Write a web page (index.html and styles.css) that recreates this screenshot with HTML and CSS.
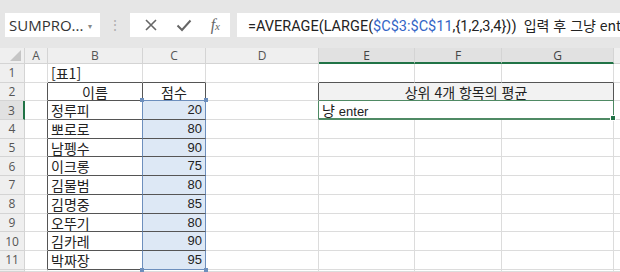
FILE: index.html
```html
<!DOCTYPE html>
<html lang="ko">
  <head>
    <meta charset="UTF-8" />
    <title>Excel - 상위 4개 항목의 평균</title>
    <link rel="stylesheet" href="styles.css">
  </head>
  <body>
    <!-- FORMULA BAR -->
    <div class="formula-bar">
      <div class="name-box">
        <span>SUMPRO...</span>
        <span class="caret">&#9662;</span>
      </div>
      <div class="grip">&#8942;</div>
      <div class="fx-buttons">
        <svg class="ico" width="14" height="14" viewBox="0 0 14 14">
          <path d="M2 2 L12 12 M12 2 L2 12" stroke="#666" stroke-width="1.6" fill="none" />
        </svg>
        <svg class="ico" width="16" height="14" viewBox="0 0 16 14">
          <path d="M1.5 7.5 L6 12 L14.5 2.5" stroke="#666" stroke-width="2" fill="none" />
        </svg>
        <span class="fx">f<i>x</i></span>
      </div>
      <div class="formula-input">
        =AVERAGE(LARGE(<span class="ref">$C$3:$C$11</span>,{1,2,3,4}))&nbsp; <span class="ko">입력 후 그냥 ente</span>
      </div>
    </div>

    <!-- SHEET -->
    <div class="sheet">
      <!-- column headers -->
      <div class="hd corner"><span class="tri"></span></div>
      <div class="hd">A</div>
      <div class="hd">B</div>
      <div class="hd">C</div>
      <div class="hd">D</div>
      <div class="hd act">E</div>
      <div class="hd act">F</div>
      <div class="hd act">G</div>
      <div class="hd"></div>

      <!-- row 1 -->
      <div class="rh">1</div>
      <div class="c"></div>
      <div class="c t-top ko">[표1]</div>
      <div class="c t-top"></div>
      <div class="c"></div>
      <div class="c t-top"></div>
      <div class="c t-top"></div>
      <div class="c t-top"></div>
      <div class="c"></div>

      <!-- row 2 -->
      <div class="rh">2</div>
      <div class="c t-left"></div>
      <div class="c t ko mid">이름</div>
      <div class="c t ko mid sel-top">점수</div>
      <div class="c t-left"></div>
      <div class="c title ko">상위 4개 항목의 평균</div>
      <div class="c"></div>

      <!-- row 3 -->
      <div class="rh act">3</div>
      <div class="c t-left"></div>
      <div class="c t ko sel-left">정루피</div>
      <div class="c t num sel first">20</div>
      <div class="c e-left"></div>
      <div class="c editing ko">냥 <span class="en">enter</span></div>
      <div class="c"></div>

      <!-- row 4 -->
      <div class="rh">4</div>
      <div class="c t-left"></div>
      <div class="c t ko sel-left">뽀로로</div>
      <div class="c t num sel">80</div>
      <div class="c"></div>
      <div class="c"></div>
      <div class="c"></div>
      <div class="c"></div>
      <div class="c"></div>

      <!-- row 5 -->
      <div class="rh">5</div>
      <div class="c t-left"></div>
      <div class="c t ko sel-left">남펭수</div>
      <div class="c t num sel">90</div>
      <div class="c"></div>
      <div class="c"></div>
      <div class="c"></div>
      <div class="c"></div>
      <div class="c"></div>

      <!-- row 6 -->
      <div class="rh">6</div>
      <div class="c t-left"></div>
      <div class="c t ko sel-left">이크롱</div>
      <div class="c t num sel">75</div>
      <div class="c"></div>
      <div class="c"></div>
      <div class="c"></div>
      <div class="c"></div>
      <div class="c"></div>

      <!-- row 7 -->
      <div class="rh">7</div>
      <div class="c t-left"></div>
      <div class="c t ko sel-left">김물범</div>
      <div class="c t num sel">80</div>
      <div class="c"></div>
      <div class="c"></div>
      <div class="c"></div>
      <div class="c"></div>
      <div class="c"></div>

      <!-- row 8 -->
      <div class="rh">8</div>
      <div class="c t-left"></div>
      <div class="c t ko sel-left">김명중</div>
      <div class="c t num sel">85</div>
      <div class="c"></div>
      <div class="c"></div>
      <div class="c"></div>
      <div class="c"></div>
      <div class="c"></div>

      <!-- row 9 -->
      <div class="rh">9</div>
      <div class="c t-left"></div>
      <div class="c t ko sel-left">오뚜기</div>
      <div class="c t num sel">80</div>
      <div class="c"></div>
      <div class="c"></div>
      <div class="c"></div>
      <div class="c"></div>
      <div class="c"></div>

      <!-- row 10 -->
      <div class="rh">10</div>
      <div class="c t-left"></div>
      <div class="c t ko sel-left">김카레</div>
      <div class="c t num sel">90</div>
      <div class="c"></div>
      <div class="c"></div>
      <div class="c"></div>
      <div class="c"></div>
      <div class="c"></div>

      <!-- row 11 -->
      <div class="rh">11</div>
      <div class="c t-left"></div>
      <div class="c t ko sel-left">박짜장</div>
      <div class="c t num sel last">95</div>
      <div class="c"></div>
      <div class="c"></div>
      <div class="c"></div>
      <div class="c"></div>
      <div class="c"></div>

      <!-- row 12 (only a sliver is visible) -->
      <div class="rh"></div>
      <div class="c"></div>
      <div class="c"></div>
      <div class="c"></div>
      <div class="c"></div>
      <div class="c"></div>
      <div class="c"></div>
      <div class="c"></div>
      <div class="c"></div>
    </div>
  </body>
</html>
```

FILE: styles.css
```css
/* Base */
* {
  box-sizing: border-box;
}

body {
  margin: 0;
  width: 620px;
  height: 272px;
  overflow: hidden;
  background: #e6e6e6;
  font-family: "Open Sans", "Noto Sans CJK KR", sans-serif;
  color: #222;
}

/* Formula bar */
.formula-bar {
  height: 48px;
  display: flex;
  align-items: flex-start;
  padding: 13px 0 0 5px;
}

.name-box {
  width: 95px;
  height: 24px;
  background: #fff;
  display: flex;
  align-items: center;
  justify-content: space-between;
  padding: 0 8px 0 4px;
  font-size: 15px;
  color: #333;
}

.name-box .caret {
  font-size: 8px;
  color: #888;
}

.grip {
  width: 30px;
  height: 24px;
  text-align: center;
  line-height: 24px;
  color: #b0b0b0;
  font-size: 14px;
}

.fx-buttons {
  width: 100px;
  height: 24px;
  background: #fff;
  display: flex;
  align-items: center;
  justify-content: space-between;
  padding: 0 10px 0 14px;
}

.fx {
  font-family: "Liberation Serif", serif;
  font-style: italic;
  font-size: 16px;
  color: #666;
}

.fx i {
  font-size: 11px;
}

.formula-input {
  flex: 1;
  height: 24px;
  margin-left: 7px;
  background: #fff;
  padding-left: 11px;
  font-family: Roboto, "Noto Sans CJK KR", sans-serif;
  font-size: 14.5px;
  line-height: 24px;
  white-space: nowrap;
  overflow: hidden;
  color: #222;
}

.formula-input .ref {
  color: #3465c6;
}

.formula-input .ko {
  font-family: "Noto Sans CJK KR", sans-serif;
  font-size: 14px;
}

/* Sheet grid */
.sheet {
  display: grid;
  grid-template-columns: 25px 23px 95px 63px 113px 96px 87px 112px 1fr;
  grid-template-rows: 16px repeat(11, 18.7px) 2px;
  background: #fff;
}

.hd,
.rh {
  background: #efefef;
  color: #555;
  font-size: 12px;
  display: flex;
  align-items: center;
  justify-content: center;
  border-right: 1px solid #d4d4d4;
  border-bottom: 1px solid #d4d4d4;
}

.hd.act {
  background: #e1e1e1;
  border-bottom: 2px solid #217346;
  color: #444;
}

.rh.act {
  background: #e1e1e1;
  border-right: 2px solid #217346;
}

.corner {
  justify-content: flex-end;
  align-items: flex-end;
  padding: 0 3px 2px 0;
}

.tri {
  width: 0;
  height: 0;
  border-left: 11px solid transparent;
  border-bottom: 11px solid #c5c5c5;
}

.c {
  border-right: 1px solid #dcdcdc;
  border-bottom: 1px solid #dcdcdc;
  font-family: "Liberation Sans", "Noto Sans CJK KR", sans-serif;
  font-size: 14px;
  line-height: 18px;
  padding: 0 3px;
  white-space: nowrap;
  color: #222;
}

.c.ko {
  font-family: "Noto Sans CJK KR", sans-serif;
}

.c.mid {
  text-align: center;
}

.c.num {
  text-align: right;
  font-size: 13px;
}

/* Table borders [표1] */
.t-top {
  border-bottom-color: #555;
}

.t-left {
  border-right-color: #555;
}

.t {
  border-right-color: #555;
  border-bottom-color: #555;
}

/* Range reference C3:C11 */
.sel {
  background: #dde8f5;
  border-right-color: #6d8fbd;
  position: relative;
}

.sel.last {
  border-bottom-color: #6d8fbd;
}

.sel-top {
  border-bottom-color: #6d8fbd;
}

.sel-left {
  border-right-color: #6d8fbd;
}

.sel.first::before,
.sel.first::after,
.sel.last::before,
.sel.last::after {
  content: "";
  position: absolute;
  width: 4px;
  height: 4px;
  background: #6d8fbd;
}

.sel.first::before {
  left: -3px;
  top: -3px;
}

.sel.first::after {
  right: -3px;
  top: -3px;
}

.sel.last::before {
  left: -3px;
  bottom: -3px;
}

.sel.last::after {
  right: -3px;
  bottom: -3px;
}

/* Merged E2:G2 and E3:G3 */
.title {
  grid-column: span 3;
  background: #f2f2f2;
  text-align: center;
  border-right-color: #555;
  border-bottom-color: #4f8a64;
}

.e-left {
  border-right-color: #4f8a64;
}

.editing {
  grid-column: span 3;
  border-right: 1px solid #4f8a64;
  border-bottom: 2px solid #4f8a64;
  position: relative;
}

.editing .en {
  font-family: "Liberation Sans", sans-serif;
  font-size: 13px;
}

.editing::after {
  content: "";
  position: absolute;
  right: -3px;
  bottom: -3px;
  width: 4px;
  height: 4px;
  background: #217346;
  border: 1px solid #fff;
}
```
